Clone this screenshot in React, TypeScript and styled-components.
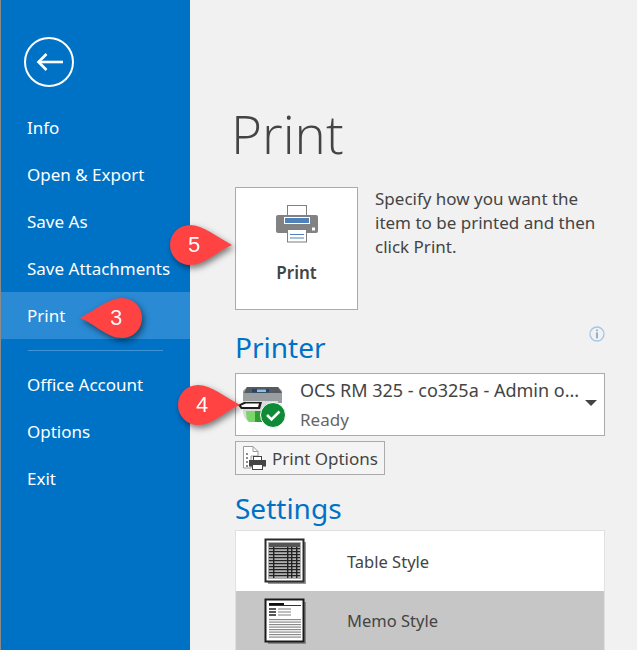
import React from "react";
import styled, { createGlobalStyle } from "styled-components";

const Global = createGlobalStyle`
  html, body { margin: 0; padding: 0; height: 100%; overflow: hidden; background: #f1f1f1; }
  #root { height: 100%; }
  * { box-sizing: border-box; }
`;

const Page = styled.div`
  position: relative;
  display: flex;
  width: 637px;
  height: 650px;
  overflow: hidden;
  background: #f1f1f1;
  font-family: "Noto Sans", "Open Sans", sans-serif;
  color: #444;
`;

const Sidebar = styled.nav`
  flex: 0 0 190px;
  display: flex;
  flex-direction: column;
  border-left: 1px solid #8a8a8a;
  background: #0072c6;
  padding-top: 37px;
`;

const BackButton = styled.div`
  width: 50px;
  height: 50px;
  margin: 0 0 17px 23px;
  color: #fff;
`;

const NavItem = styled.div<{ $active?: boolean }>`
  height: 47px;
  flex: none;
  display: flex;
  align-items: center;
  padding-left: 26px;
  color: #fff;
  font-size: 17px;
  background: ${(p) => (p.$active ? "#2a8ad4" : "transparent")};
`;

const NavDivider = styled.div`
  height: 1px;
  flex: none;
  margin: 11px 27px 10px 27px;
  background: #3f95d5;
`;

const Main = styled.main`
  flex: 1;
  display: flex;
  flex-direction: column;
  padding: 0 32px 0 45px;
  > * { flex-shrink: 0; }
`;

const Title = styled.h1`
  margin: 94px 0 0 -4px;
  height: 80px;
  font-size: 53px;
  line-height: 80px;
  font-weight: 300;
  font-family: "Open Sans", "Noto Sans", sans-serif;
  color: #444;
`;

const PrintRow = styled.div`
  display: flex;
  margin-top: 13px;
  gap: 17px;
`;

const BigButton = styled.div`
  width: 123px;
  height: 123px;
  flex: none;
  border: 1px solid #ababab;
  background: #fff;
  display: flex;
  flex-direction: column;
  align-items: center;
  padding-top: 17px;
`;

const BigLabel = styled.div`
  margin-top: 18px;
  font-size: 17px;
  line-height: 24px;
  font-weight: 600;
  color: #444;
`;

const Description = styled.p`
  margin: 0;
  width: 226px;
  font-size: 17px;
  line-height: 24px;
  color: #444;
`;

const HeadingRow = styled.div`
  display: flex;
  align-items: flex-start;
  justify-content: space-between;
  margin: 16px 0 4px;
`;

const SectionTitle = styled.h2<{ $gap?: number }>`
  margin: ${(p) => p.$gap ?? 0}px 0 0 0;
  height: 43px;
  font-size: 28px;
  line-height: 43px;
  font-weight: 400;
  color: #0072c6;
`;

const InfoIcon = styled.svg`
  width: 16px;
  height: 16px;
  margin: 0;
`;

const PrinterSelect = styled.div`
  width: 370px;
  height: 63px;
  border: 1px solid #ababab;
  background: #fff;
  display: flex;
  align-items: stretch;
  position: relative;
`;

const PrinterIconBox = styled.div`
  width: 64px;
  flex: none;
  padding: 9px 0 0 2px;
`;

const PrinterText = styled.div`
  display: flex;
  flex-direction: column;
  padding-top: 2px;
  font-size: 18px;
  line-height: 29px;
  white-space: nowrap;
`;

const PrinterStatus = styled.span`
  color: #666;
  font-size: 17px;
`;

const Caret = styled.span`
  position: absolute;
  right: 7px;
  top: 26px;
  width: 0;
  height: 0;
  border-left: 6px solid transparent;
  border-right: 6px solid transparent;
  border-top: 6px solid #444;
`;

const OptionsButton = styled.div`
  width: 150px;
  height: 34px;
  margin-top: 5px;
  border: 1px solid #ababab;
  background: #f4f4f4;
  display: flex;
  align-items: center;
  gap: 6px;
  padding-left: 7px;
  font-size: 17px;
  color: #444;
`;

const StyleList = styled.div`
  width: 370px;
  border: 1px solid #e0e0e0;
  border-bottom: 0;
  background: #fff;
`;

const StyleRow = styled.div<{ $selected?: boolean }>`
  height: ${(p) => (p.$selected ? 59 : 60)}px;
  display: flex;
  align-items: center;
  padding-left: 28px;
  gap: 41px;
  font-size: 16.5px;
  color: #444;
  background: ${(p) => (p.$selected ? "#c6c6c6" : "#fff")};
`;

const CalloutBox = styled.div<{ $x: number; $y: number; $flip?: boolean }>`
  position: absolute;
  left: ${(p) => p.$x}px;
  top: ${(p) => p.$y}px;
  width: 62px;
  height: 40px;
  filter: drop-shadow(2px 3px 3px rgba(0, 0, 0, 0.5));
  svg {
    display: block;
    transform: ${(p) => (p.$flip ? "scaleX(-1)" : "none")};
  }
`;

const CalloutNumber = styled.span<{ $flip?: boolean }>`
  position: absolute;
  top: 0;
  ${(p) => (p.$flip ? "right: 6px;" : "left: 4px;")}
  width: 40px;
  height: 40px;
  line-height: 40px;
  text-align: center;
  color: #fff;
  font-size: 22px;
  font-family: "Liberation Sans", sans-serif;
`;

const Callout = ({ x, y, n, flip }: { x: number; y: number; n: number; flip?: boolean }) => (
  <CalloutBox $x={x} $y={y} $flip={flip}>
    <svg width="62" height="40" viewBox="0 0 62 40">
      <path d="M20 0C33 0 47 12 62 20C47 26 35 40 20 40A20 20 0 0 1 20 0Z" fill="#ff4343" />
    </svg>
    <CalloutNumber $flip={flip}>{n}</CalloutNumber>
  </CalloutBox>
);

const BigPrinter = () => (
  <svg width="42" height="38" viewBox="0 0 42 38">
    <rect x="11.5" y="0.5" width="19" height="12" fill="#fff" stroke="#7f7f7f" />
    <path d="M2 10H40a2 2 0 0 1 2 2V26a2 2 0 0 1-2 2H2a2 2 0 0 1-2-2V12a2 2 0 0 1 2-2Z" fill="#828282" />
    <rect x="8.5" y="12.5" width="25" height="6" fill="#4f81bd" stroke="#fff" />
    <rect x="11.5" y="24.5" width="19" height="12.5" fill="#fff" stroke="#7f7f7f" />
    <path d="M14 29.5H28M14 33H28" stroke="#4f81bd" />
    <rect x="36" y="22.5" width="3" height="3" fill="#fff" />
  </svg>
);

const StatusPrinter = () => (
  <svg width="50" height="46" viewBox="0 0 50 46">
    <path d="M5 8L9 4H40L44 8V20H5Z" fill="#9a9ea0" />
    <path d="M9 4H40L44 10H6Z" fill="#565b5f" />
    <rect x="14" y="6" width="17" height="3.5" fill="#22466b" />
    <rect x="19" y="6.5" width="9" height="2.5" fill="#8cc0e8" />
    <path d="M5 18H40V38H10Q6 36 5 30Z" fill="#dcdcdc" />
    <path d="M0 22L6 19H24L22 26H3Z" fill="#1e1e1e" />
    <path d="M3 22.5L8 20.5H21L20 24H4Z" fill="#fff" />
    <path d="M8 28H28V39H11Q8 37 8 28Z" fill="#7bd46c" />
    <path d="M17 28H30V39H17Z" fill="#2e9f33" />
    <circle cx="35" cy="32" r="12.5" fill="#0f8a37" stroke="#fff" />
    <path d="M29 32L33.5 36.5L41.5 28.5" stroke="#fff" strokeWidth="2.6" fill="none" />
  </svg>
);

const OptionsIcon = () => (
  <svg width="23" height="24" viewBox="0 0 23 24">
    <path d="M0.5 0.5H10L15 5.5V10H8V22H0.5Z" fill="#fff" stroke="#9a9a9a" />
    <path d="M10 0.5V5.5H15" fill="none" stroke="#9a9a9a" />
    <path d="M3 8h2M3 12h2M3 16h2M3 20h2" stroke="#666" strokeWidth="1.4" />
    <rect x="10.5" y="10.5" width="8" height="5" fill="#fff" stroke="#444" />
    <rect x="6" y="14" width="17" height="6.5" fill="#444" />
    <rect x="9.5" y="18.5" width="10" height="5" fill="#fff" stroke="#444" />
  </svg>
);

const TableIcon = () => (
  <svg width="42" height="46" viewBox="0 0 42 46">
    <path d="M40 4H42V46H4V44H40Z" fill="#999" />
    <rect x="1.5" y="1.5" width="38" height="42" fill="#fff" stroke="#2b2b2b" strokeWidth="2" />
    <rect x="4" y="4" width="33" height="37" fill="#b0b0b0" />
    <rect x="5" y="5" width="31" height="4" fill="#555" />
    {[10, 13, 16, 19, 22, 25, 28, 31, 34, 37].map((y) => (
      <rect key={y} x="5" y={y} width="31" height="1.2" fill="#222" />
    ))}
    {[9, 23, 27, 32].map((x) => (
      <rect key={x} x={x} y="9" width="1.4" height="31" fill="#222" />
    ))}
  </svg>
);

const MemoIcon = () => (
  <svg width="42" height="46" viewBox="0 0 42 46">
    <path d="M40 4H42V46H4V44H40Z" fill="#888" />
    <rect x="1.5" y="1.5" width="38" height="42" fill="#fff" stroke="#1a1a1a" strokeWidth="2" />
    <rect x="5" y="5" width="15" height="2" fill="#111" />
    <rect x="5" y="7" width="32" height="1" fill="#333" />
    <path d="M5 11H12M5 14H12M5 17H12" stroke="#222" strokeWidth="1.5" />
    <path d="M14 11H27M14 14H27M14 17H27" stroke="#aaa" strokeWidth="1.5" />
    {[21, 23.5, 26, 28.5, 31, 33.5, 36, 38.5].map((y) => (
      <rect key={y} x="5" y={y} width="32" height="1.2" fill="#8a8a8a" />
    ))}
  </svg>
);

export default function App() {
  return (
    <Page>
      <Global />
      <Sidebar>
        <BackButton>
          <svg width="50" height="50" viewBox="0 0 50 50" fill="none" stroke="currentColor">
            <circle cx="25" cy="25" r="24" strokeWidth="2" />
            <path d="M39 25H15" strokeWidth="2.6" />
            <path d="M22.5 17L14.5 25L22.5 33" strokeWidth="2.6" />
          </svg>
        </BackButton>
        <NavItem>Info</NavItem>
        <NavItem>Open &amp; Export</NavItem>
        <NavItem>Save As</NavItem>
        <NavItem>Save Attachments</NavItem>
        <NavItem $active>Print</NavItem>
        <NavDivider />
        <NavItem>Office Account</NavItem>
        <NavItem>Options</NavItem>
        <NavItem>Exit</NavItem>
      </Sidebar>
      <Main>
        <Title>Print</Title>
        <PrintRow>
          <BigButton>
            <BigPrinter />
            <BigLabel>Print</BigLabel>
          </BigButton>
          <Description>Specify how you want the item to be printed and then click Print.</Description>
        </PrintRow>
        <HeadingRow>
          <SectionTitle>Printer</SectionTitle>
          <InfoIcon viewBox="0 0 16 16">
            <circle cx="8" cy="8" r="7" fill="none" stroke="#a9c4e4" strokeWidth="1.3" />
            <rect x="7.2" y="3.6" width="1.6" height="1.6" fill="#7ba0d0" />
            <rect x="7.2" y="6.4" width="1.6" height="6" fill="#7ba0d0" />
          </InfoIcon>
        </HeadingRow>
        <PrinterSelect>
          <PrinterIconBox>
            <StatusPrinter />
          </PrinterIconBox>
          <PrinterText>
            <span>OCS RM 325 - co325a - Admin o...</span>
            <PrinterStatus>Ready</PrinterStatus>
          </PrinterText>
          <Caret />
        </PrinterSelect>
        <OptionsButton>
          <OptionsIcon />
          Print Options
        </OptionsButton>
        <SectionTitle $gap={12}>Settings</SectionTitle>
        <StyleList>
          <StyleRow>
            <TableIcon />
            Table Style
          </StyleRow>
          <StyleRow $selected>
            <MemoIcon />
            Memo Style
          </StyleRow>
        </StyleList>
      </Main>
      <Callout x={170} y={225} n={5} />
      <Callout x={80} y={298} n={3} flip />
      <Callout x={178} y={385} n={4} />
    </Page>
  );
}
